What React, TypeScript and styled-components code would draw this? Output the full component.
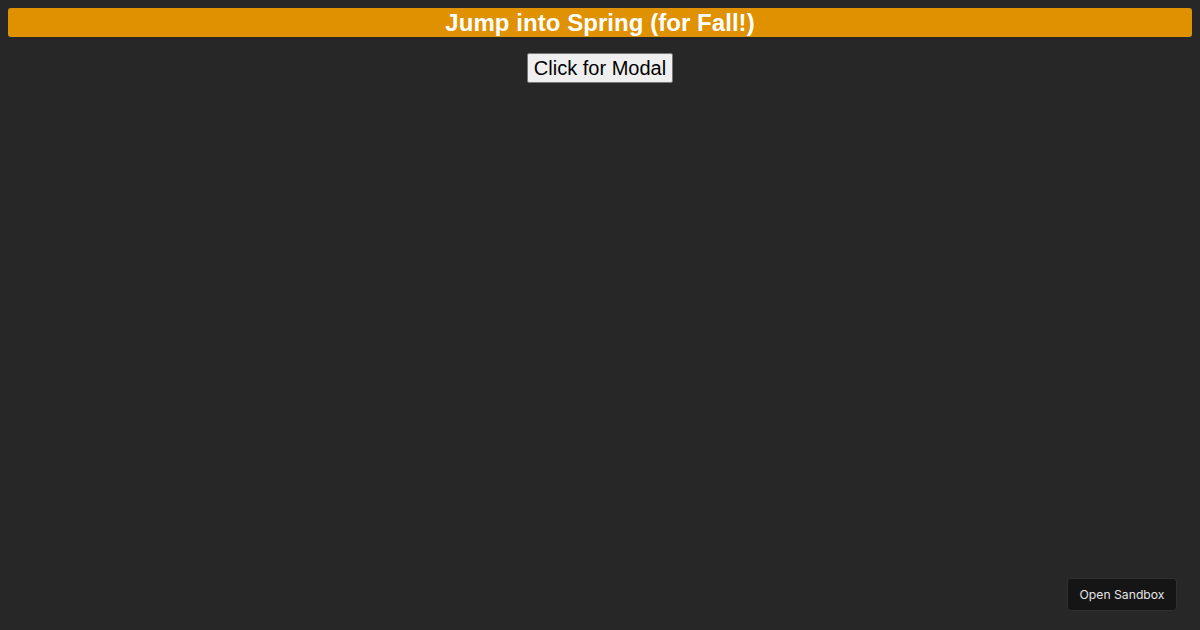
import React from "react";
import styled, { createGlobalStyle } from "styled-components";

const Global = createGlobalStyle`
  html, body {
    margin: 0;
    padding: 0;
    background: #272727;
    height: 100%;
  }
  body {
    font-family: "Liberation Sans", Arial, sans-serif;
  }
`;

const Page = styled.div`
  padding: 8px;
  display: flex;
  flex-direction: column;
  align-items: center;
  gap: 16px;
`;

const Banner = styled.h1`
  box-sizing: border-box;
  width: 100%;
  height: 29px;
  margin: 0;
  background: #e09100;
  border-radius: 3px;
  color: #ffffff;
  font-family: "Liberation Sans", Arial, sans-serif;
  font-weight: 700;
  font-size: 24px;
  letter-spacing: 0.05px;
  line-height: 29px;
  text-align: center;
`;

const ModalButton = styled.button`
  box-sizing: border-box;
  height: 30px;
  padding: 0 6px;
  background: #efefef;
  border: 1px solid #767676;
  border-radius: 2px;
  color: #000;
  font-family: "Liberation Sans", Arial, sans-serif;
  font-size: 20px;
  line-height: 28px;
  cursor: pointer;
`;

const SandboxButton = styled.button`
  position: fixed;
  right: 23px;
  bottom: 19px;
  box-sizing: border-box;
  width: 110px;
  height: 33px;
  padding: 0;
  background: #151515;
  border: 1px solid #2f2f2f;
  border-radius: 4px;
  color: #e6e6e6;
  font-family: Inter, "Liberation Sans", sans-serif;
  font-size: 12.2px;
  text-align: center;
  cursor: pointer;
`;

export default function App() {
  return (
    <>
      <Global />
      <Page>
        <Banner>Jump into Spring (for Fall!)</Banner>
        <ModalButton>Click for Modal</ModalButton>
      </Page>
      <SandboxButton>Open Sandbox</SandboxButton>
    </>
  );
}
